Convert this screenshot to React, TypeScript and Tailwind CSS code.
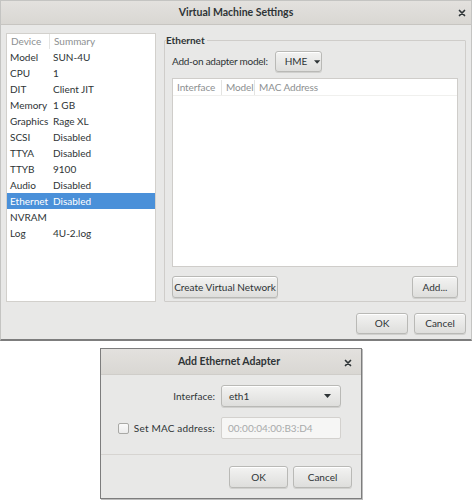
import React from "react";

const font = { fontFamily: 'Lato, "Noto Sans", sans-serif' };

function Arrow({ className = "" }: { className?: string }) {
  return (
    <svg width="7" height="4" viewBox="0 0 7 4" className={className}>
      <path d="M0 0 L7 0 L3.5 4 Z" fill="#2e3436" />
    </svg>
  );
}

function Btn({ children, className = "" }: { children: React.ReactNode; className?: string }) {
  return (
    <div
      className={
        "flex items-center whitespace-nowrap rounded-[3px] border border-[#b9b9b6] bg-gradient-to-b from-[#f3f3f2] to-[#dededc] text-[10px] text-[#2e3436] shadow-[inset_0_1px_0_#ffffff,0_1px_0_#d0d0ce] " +
        className
      }
    >
      {children}
    </div>
  );
}

function CloseX() {
  return (
    <svg width="8" height="8" viewBox="0 0 8 8">
      <path d="M1.5 1.5 L6.5 6.5 M6.5 1.5 L1.5 6.5" stroke="#2e3436" strokeWidth="1.7" strokeLinecap="round" />
    </svg>
  );
}

const rows: [string, string][] = [
  ["Model", "SUN-4U"],
  ["CPU", "1"],
  ["DIT", "Client JIT"],
  ["Memory", "1 GB"],
  ["Graphics", "Rage XL"],
  ["SCSI", "Disabled"],
  ["TTYA", "Disabled"],
  ["TTYB", "9100"],
  ["Audio", "Disabled"],
  ["Ethernet", "Disabled"],
  ["NVRAM", ""],
  ["Log", "4U-2.log"],
];

export default function App() {
  return (
    <div className="w-[474px] h-[504px] bg-white overflow-hidden" style={font}>
      {/* Main window */}
      <div className="w-[472px] h-[341px] flex flex-col border border-[#c4c4c2] border-b-[2px] border-b-[#7d7d7d] bg-[#e8e8e7]">
        <div className="relative h-[24px] shrink-0 flex items-center justify-center bg-gradient-to-b from-[#e3e1de] to-[#d9d7d3] border-b border-[#c7c5c1]">
          <span className="text-[10.5px] font-bold text-[#2e3436]">Virtual Machine Settings</span>
          <div className="absolute right-[5px] top-[8px]">
            <CloseX />
          </div>
        </div>
        <div className="flex flex-col px-[5px] pt-[8px]">
          <div className="flex h-[269px]">
            {/* device list */}
            <div className="w-[151px] h-full bg-white border border-[#d2d0cc] text-[10px] text-[#2e3436] whitespace-nowrap">
              <div className="flex h-[15px] items-center text-[#8d9091]">
                <span className="w-[43px] pl-[4px] border-r border-[#e4e4e2]">Device</span>
                <span className="pl-[4px]">Summary</span>
              </div>
              {rows.map(([a, b]) => {
                const sel = a === "Ethernet";
                return (
                  <div
                    key={a}
                    className={
                      "flex h-[16px] items-center " + (sel ? "bg-[#4a90d9] text-white" : "")
                    }
                  >
                    <span className="w-[43px] pl-[3px]">{a}</span>
                    <span className="pl-[3px]">{b}</span>
                  </div>
                );
              })}
            </div>
            {/* frame */}
            <fieldset className="ml-[8px] w-[303px] h-full border border-[#cfcdca] rounded-[1px] flex flex-col">
              <legend className="ml-[1px] pr-[2px] text-[10px] font-bold leading-[14px] text-[#2e3436]">
                Ethernet
              </legend>
              <div className="flex flex-col px-[7px] pt-[4px] h-full">
                <div className="flex items-center h-[21px]">
                  <span className="text-[10px] text-[#2e3436] tracking-[-0.25px] whitespace-nowrap">Add-on adapter model:</span>
                  <Btn className="ml-[7px] w-[47px] h-[21px] gap-[7px] justify-start pl-[9px]">
                    <span>HME</span>
                    <Arrow />
                  </Btn>
                </div>
                <div className="mt-[6px] h-[189px] w-[286px] bg-white border border-[#cfcdca]">
                  <div className="flex h-[17px] items-center text-[10px] text-[#8d9091] border-b border-[#f0f0ee] whitespace-nowrap tracking-[-0.1px]">
                    <span className="w-[49px] pl-[4px] border-r border-[#e4e4e2]">Interface</span>
                    <span className="w-[33px] pl-[4px] border-r border-[#e4e4e2]">Model</span>
                    <span className="pl-[4px]">MAC Address</span>
                  </div>
                </div>
                <div className="mt-[9px] flex justify-between w-[286px]">
                  <Btn className="w-[106px] h-[22px] justify-center">Create Virtual Network</Btn>
                  <Btn className="w-[46px] h-[22px] justify-center">Add...</Btn>
                </div>
              </div>
            </fieldset>
          </div>
          <div className="mt-[11px] flex justify-end gap-[6px]">
            <Btn className="w-[52px] h-[21px] justify-center">OK</Btn>
            <Btn className="w-[52px] h-[21px] justify-center">Cancel</Btn>
          </div>
        </div>
      </div>

      {/* Add Ethernet Adapter dialog */}
      <div className="ml-[100px] mt-[7px] w-[262px] h-[151px] flex flex-col border border-[#7d7d7d] bg-[#e8e8e7] shadow-[1px_1px_0_#bdbdbd]">
        <div className="relative h-[26px] shrink-0 flex items-center justify-center bg-gradient-to-b from-[#e3e1de] to-[#d9d7d3] border-b border-[#cfcdc9]">
          <span className="text-[10.5px] font-bold text-[#2e3436] -ml-[4px]">Add Ethernet Adapter</span>
          <div className="absolute right-[9px] top-[10px]">
            <CloseX />
          </div>
        </div>
        <div className="grid grid-cols-[114px_120px] gap-x-[6px] gap-y-[10px] pt-[10px]">
          <div className="flex items-center justify-end h-[22px] text-[10px] text-[#2e3436]">Interface:</div>
          <Btn className="h-[22px] justify-between pl-[7px] pr-[9px]">
            <span>eth1</span>
            <Arrow />
          </Btn>
          <div className="flex items-center justify-end h-[22px] gap-[5px] text-[10px] text-[#2e3436] whitespace-nowrap">
            <div className="w-[11px] h-[11px] rounded-[2px] border border-[#a9a9a6] bg-gradient-to-b from-[#fafafa] to-[#ececec]" />
            <span className="tracking-[0.2px]">Set MAC address:</span>
          </div>
          <div className="h-[22px] flex items-center px-[6px] bg-[#f6f6f5] border border-[#d3d1ce] rounded-[2px] text-[10px] text-[#a8aaab]">
            00:00:04:00:B3:D4
          </div>
        </div>
        <div className="mt-[15px] border-t border-[#d6d4d1]" />
        <div className="mt-[11px] flex justify-end gap-[5px] pr-[9px]">
          <Btn className="w-[59px] h-[22px] justify-center">OK</Btn>
          <Btn className="w-[59px] h-[22px] justify-center">Cancel</Btn>
        </div>
      </div>
    </div>
  );
}
